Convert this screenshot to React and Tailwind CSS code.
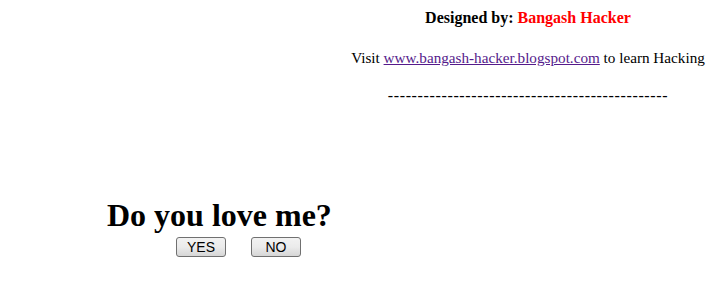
export default function App() {
  const btn =
    "w-[50px] h-[20px] rounded-[3px] border border-[#707070] bg-gradient-to-b from-[#f2f2f2] via-[#ebebeb] to-[#d6d6d6] text-[14px] leading-none text-black [font-family:'Liberation_Sans',Arial,sans-serif] flex items-center justify-center";
  return (
    <div className="w-[716px] h-[308px] bg-white text-black [font-family:'Liberation_Serif','Times_New_Roman',serif] text-[16px] overflow-hidden">
      <div className="ml-[340px] w-[376px] flex flex-col items-center pt-[9px]">
        <div className="font-bold leading-[18px]">
          Designed by: <span className="text-[#ff0000]">Bangash Hacker</span>
        </div>
        <div className="mt-[22px] leading-[18px] text-[15.2px]">
          Visit{" "}
          <a href="#" className="text-[#551a8b] underline">
            www.bangash-hacker.blogspot.com
          </a>{" "}
          to learn Hacking
        </div>
        <div className="mt-[20px] leading-[18px] tracking-[0.64px]">
          -----------------------------------------------
        </div>
      </div>
      <div className="flex flex-col items-start pl-[107px] mt-[92px]">
        <h1 className="text-[32px] font-bold leading-[36px]">Do you love me?</h1>
        <div className="flex gap-[25px] ml-[69px] mt-[4px]">
          <button className={btn}>YES</button>
          <button className={btn}>NO</button>
        </div>
      </div>
    </div>
  );
}
